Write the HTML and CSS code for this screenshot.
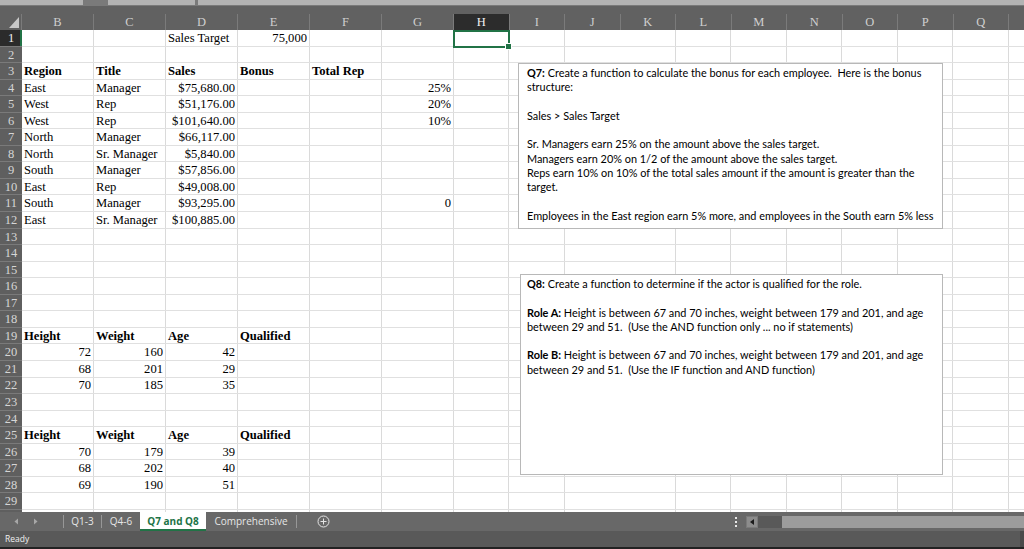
FILE: index.html
```html
<!DOCTYPE html>
<html>
<head>
<meta charset="utf-8">
<link rel="stylesheet" href="styles.css">
</head>
<body>
<div class="top">
  <div class="tbox namebox"></div>
  <div class="tgap"></div>
  <div class="tbox fx"></div>
  <div class="tbox formula"></div>
</div>
<div class="colhead">
  <div class="corner"><span class="tri"></span></div>
  <div class="ch w">B</div>
  <div class="ch w">C</div>
  <div class="ch w">D</div>
  <div class="ch w">E</div>
  <div class="ch w">F</div>
  <div class="ch w">G</div>
  <div class="ch n sel">H</div>
  <div class="ch n">I</div>
  <div class="ch n">J</div>
  <div class="ch n">K</div>
  <div class="ch n">L</div>
  <div class="ch n">M</div>
  <div class="ch n">N</div>
  <div class="ch n">O</div>
  <div class="ch n">P</div>
  <div class="ch n">Q</div>
  <div class="ch rest"></div>
</div>
<div class="main">
  <div class="rowhead">
    <div class="rh sel">1</div><div class="rh">2</div><div class="rh">3</div><div class="rh">4</div><div class="rh">5</div>
    <div class="rh">6</div><div class="rh">7</div><div class="rh">8</div><div class="rh">9</div><div class="rh">10</div>
    <div class="rh">11</div><div class="rh">12</div><div class="rh">13</div><div class="rh">14</div><div class="rh">15</div>
    <div class="rh">16</div><div class="rh">17</div><div class="rh">18</div><div class="rh">19</div><div class="rh">20</div>
    <div class="rh">21</div><div class="rh">22</div><div class="rh">23</div><div class="rh">24</div><div class="rh">25</div>
    <div class="rh">26</div><div class="rh">27</div><div class="rh">28</div><div class="rh">29</div>
  </div>
  <div class="cells">
    <div class="row"><div class="c"></div><div class="c"></div><div class="c">Sales Target</div><div class="c r">75,000</div></div>
    <div class="row"></div>
    <div class="row b"><div class="c">Region</div><div class="c">Title</div><div class="c">Sales</div><div class="c">Bonus</div><div class="c">Total Rep</div></div>
    <div class="row"><div class="c">East</div><div class="c">Manager</div><div class="c r">$75,680.00</div><div class="c"></div><div class="c"></div><div class="c r">25%</div></div>
    <div class="row"><div class="c">West</div><div class="c">Rep</div><div class="c r">$51,176.00</div><div class="c"></div><div class="c"></div><div class="c r">20%</div></div>
    <div class="row"><div class="c">West</div><div class="c">Rep</div><div class="c r">$101,640.00</div><div class="c"></div><div class="c"></div><div class="c r">10%</div></div>
    <div class="row"><div class="c">North</div><div class="c">Manager</div><div class="c r">$66,117.00</div></div>
    <div class="row"><div class="c">North</div><div class="c">Sr. Manager</div><div class="c r">$5,840.00</div></div>
    <div class="row"><div class="c">South</div><div class="c">Manager</div><div class="c r">$57,856.00</div></div>
    <div class="row"><div class="c">East</div><div class="c">Rep</div><div class="c r">$49,008.00</div></div>
    <div class="row"><div class="c">South</div><div class="c">Manager</div><div class="c r">$93,295.00</div><div class="c"></div><div class="c"></div><div class="c r">0</div></div>
    <div class="row"><div class="c">East</div><div class="c">Sr. Manager</div><div class="c r">$100,885.00</div></div>
    <div class="row"></div>
    <div class="row"></div>
    <div class="row"></div>
    <div class="row"></div>
    <div class="row"></div>
    <div class="row"></div>
    <div class="row b"><div class="c">Height</div><div class="c">Weight</div><div class="c">Age</div><div class="c">Qualified</div></div>
    <div class="row"><div class="c r">72</div><div class="c r">160</div><div class="c r">42</div></div>
    <div class="row"><div class="c r">68</div><div class="c r">201</div><div class="c r">29</div></div>
    <div class="row"><div class="c r">70</div><div class="c r">185</div><div class="c r">35</div></div>
    <div class="row"></div>
    <div class="row"></div>
    <div class="row b"><div class="c">Height</div><div class="c">Weight</div><div class="c">Age</div><div class="c">Qualified</div></div>
    <div class="row"><div class="c r">70</div><div class="c r">179</div><div class="c r">39</div></div>
    <div class="row"><div class="c r">68</div><div class="c r">202</div><div class="c r">40</div></div>
    <div class="row"><div class="c r">69</div><div class="c r">190</div><div class="c r">51</div></div>
    <div class="row"></div>

    <div class="cursor"></div>

    <div class="tb q7"><b>Q7:</b> Create a function to calculate the bonus for each employee.&nbsp; Here is the bonus<br>structure:<br><br>Sales &gt; Sales Target<br><br>Sr. Managers earn 25% on the amount above the sales target.<br>Managers earn 20% on 1/2 of the amount above the sales target.<br>Reps earn 10% on 10% of the total sales amount if the amount is greater than the<br>target.<br><br>Employees in the East region earn 5% more, and employees in the South earn 5% less</div>

    <div class="tb q8"><b>Q8:</b> Create a function to determine if the actor is qualified for the role.<br><br><b>Role A:</b> Height is between 67 and 70 inches, weight between 179 and 201, and age<br>between 29 and 51.&nbsp; (Use the AND function only ... no if statements)<br><br><b>Role B:</b> Height is between 67 and 70 inches, weight between 179 and 201, and age<br>between 29 and 51.&nbsp; (Use the IF function and AND function)</div>
  </div>
</div>
<div class="tabs">
  <div class="nav">
    <svg width="5" height="7" viewBox="0 0 5 7"><path d="M4 0.5 L0.5 3.5 L4 6.5 Z" fill="#a8a8a8"/></svg>
    <svg width="5" height="7" viewBox="0 0 5 7"><path d="M1 0.5 L4.5 3.5 L1 6.5 Z" fill="#a8a8a8"/></svg>
  </div>
  <div class="sep"></div>
  <div class="tab t1">Q1-3</div>
  <div class="sep"></div>
  <div class="tab t2">Q4-6</div>
  <div class="tab active">Q7 and Q8</div>
  <div class="tab t3">Comprehensive</div>
  <div class="sep"></div>
  <svg class="plus" width="13" height="13" viewBox="0 0 13 13"><circle cx="6.5" cy="6.5" r="5.5" fill="none" stroke="#e4e4e4" stroke-width="1"/><path d="M6.5 3.5 V9.5 M3.5 6.5 H9.5" stroke="#e4e4e4" stroke-width="1"/></svg>
  <div class="dots"><span></span><span></span><span></span></div>
  <div class="sbtn"><svg width="4" height="6" viewBox="0 0 4 6"><path d="M4 0 L0 3 L4 6 Z" fill="#1a1a1a"/></svg></div>
  <div class="thumb"></div>
  <div class="track"></div>
</div>
<div class="status">Ready</div>
<div class="bottom"></div>
</body>
</html>
```
FILE: styles.css
```css
html, body {
  margin: 0;
  padding: 0;
}
body {
  width: 1024px;
  height: 549px;
  overflow: hidden;
  background: #5a5a5a;
  font-family: "Liberation Serif", "Times New Roman", serif;
}

/* top strip (formula bar remnant) */
.top {
  height: 6px;
  display: flex;
  background: #7a7a7a;
}
.tbox {
  background: #b3b3b3;
  height: 5px;
}
.namebox { width: 83px; }
.tgap { width: 25px; }
.fx { width: 87px; }
.formula { flex: 1; margin-left: 3px; }

/* column headers */
.colhead {
  height: 24px;
  box-sizing: border-box;
  padding-top: 8px;
  background: #616161;
  display: flex;
}
.corner {
  width: 22px;
  flex: none;
  height: 16px;
  display: flex;
  justify-content: flex-end;
  align-items: flex-end;
  padding: 0 2px 2px 0;
  box-sizing: border-box;
  border-right: 1px solid #7b7b7b;
}
.tri {
  width: 10px;
  height: 11px;
  background: #c8c8c8;
  clip-path: polygon(100% 0, 100% 100%, 0 100%);
}
.ch {
  flex: none;
  height: 16px;
  line-height: 16px;
  text-align: center;
  color: #cfcfcf;
  font-size: 12.5px;
  border-right: 1px solid #7b7b7b;
  box-sizing: border-box;
}
.ch.w { width: 72px; }
.ch.n { width: 55.5px; }
.ch.sel {
  background: #2c2c2c;
  color: #f2f2f2;
}
.ch.rest { flex: 1; border-right: none; }

/* sheet */
.main {
  display: flex;
  height: 482px;
}
.rowhead {
  width: 22px;
  flex: none;
  background: #5f5f5f;
  overflow: hidden;
}
.rh {
  height: 16.55px;
  line-height: 16.55px;
  text-align: center;
  color: #d6d6d6;
  font-size: 12.5px;
  border-bottom: 1px solid #7a7a7a;
  box-sizing: border-box;
}
.rh.sel {
  background: #2b2b2b;
  color: #f2f2f2;
  box-shadow: inset -2px 0 #217346;
}
.cells {
  flex: 1;
  position: relative;
  overflow: hidden;
  background-color: #fff;
  background-image:
    repeating-linear-gradient(to bottom, transparent 0 15.55px, #e0e0e0 15.55px 16.55px),
    repeating-linear-gradient(to right, transparent 0 71px, #dadada 71px 72px),
    repeating-linear-gradient(to right, transparent 0 54.5px, #dadada 54.5px 55.5px);
  background-size: 100% 100%, 432px 100%, 570px 100%;
  background-position: 0 0, 0 0, 432px 0;
  background-repeat: no-repeat;
}
.row {
  display: flex;
  height: 16.55px;
  line-height: 16.55px;
  font-size: 12.6px;
  color: #000;
}
.row.b { font-weight: bold; }
.c {
  flex: none;
  width: 72px;
  box-sizing: border-box;
  padding: 0 3px 0 2px;
  white-space: nowrap;
}
.c.r { text-align: right; }

.cursor {
  position: absolute;
  left: 431px;
  top: 0;
  width: 57px;
  height: 18px;
  border: 2px solid #217346;
  box-sizing: border-box;
}
.cursor::after {
  content: "";
  position: absolute;
  right: -4px;
  bottom: -4px;
  width: 5px;
  height: 5px;
  background: #217346;
  border: 1px solid #fff;
}

/* text boxes */
.tb {
  position: absolute;
  background: #fff;
  border: 1px solid #b8b8b8;
  box-sizing: border-box;
  font-family: Lato, "Open Sans", sans-serif;
  font-size: 10.9px;
  line-height: 14.3px;
  padding: 2px 8px;
  white-space: nowrap;
  color: #000;
}
.q7 { left: 496px; top: 33px; width: 425px; height: 166px; }
.q8 { left: 498px; top: 244px; width: 423px; height: 201px; padding-left: 6px; }

/* sheet tabs */
.tabs {
  height: 19px;
  background: #686868;
  display: flex;
  align-items: center;
  font-family: "Open Sans", "Noto Sans", sans-serif;
  font-size: 10px;
  color: #e6e6e6;
}
.nav {
  width: 63px;
  flex: none;
  display: flex;
  align-items: center;
  gap: 14px;
  padding-left: 14px;
  box-sizing: border-box;
}
.sep {
  width: 1px;
  height: 13px;
  background: #979797;
  flex: none;
}
.tab {
  height: 19px;
  line-height: 19px;
  text-align: center;
  flex: none;
  box-sizing: border-box;
}
.t1 { width: 37px; }
.t2 { width: 38px; }
.active {
  width: 66px;
  background: #fff;
  color: #217346;
  font-weight: bold;
  border-bottom: 2px solid #217346;
  line-height: 18px;
}
.t3 { width: 90px; }
.plus {
  margin-left: 20px;
  flex: none;
}
.dots {
  margin-left: auto;
  width: 2px;
  height: 10px;
  display: flex;
  flex-direction: column;
  justify-content: space-between;
  margin-right: 9px;
}
.dots span {
  width: 2px;
  height: 2px;
  background: #e8e8e8;
}
.sbtn {
  width: 12px;
  height: 12px;
  background: #8c8c8c;
  box-sizing: border-box;
  border: 1px solid #7a7a7a;
  display: flex;
  align-items: center;
  justify-content: center;
  flex: none;
}
.thumb {
  width: 24px;
  height: 12px;
  background: #595959;
  flex: none;
}
.track {
  width: 242px;
  height: 12px;
  background: #9c9c9c;
  flex: none;
}

/* status bar */
.status {
  height: 16px;
  line-height: 16px;
  background: #595959;
  color: #f0f0f0;
  font-family: "Open Sans", "Noto Sans", sans-serif;
  font-size: 8.5px;
  padding-left: 5px;
  box-shadow: inset -4px 0 #4a4a4a;
}
.bottom {
  height: 2px;
  background: #222;
}
```
